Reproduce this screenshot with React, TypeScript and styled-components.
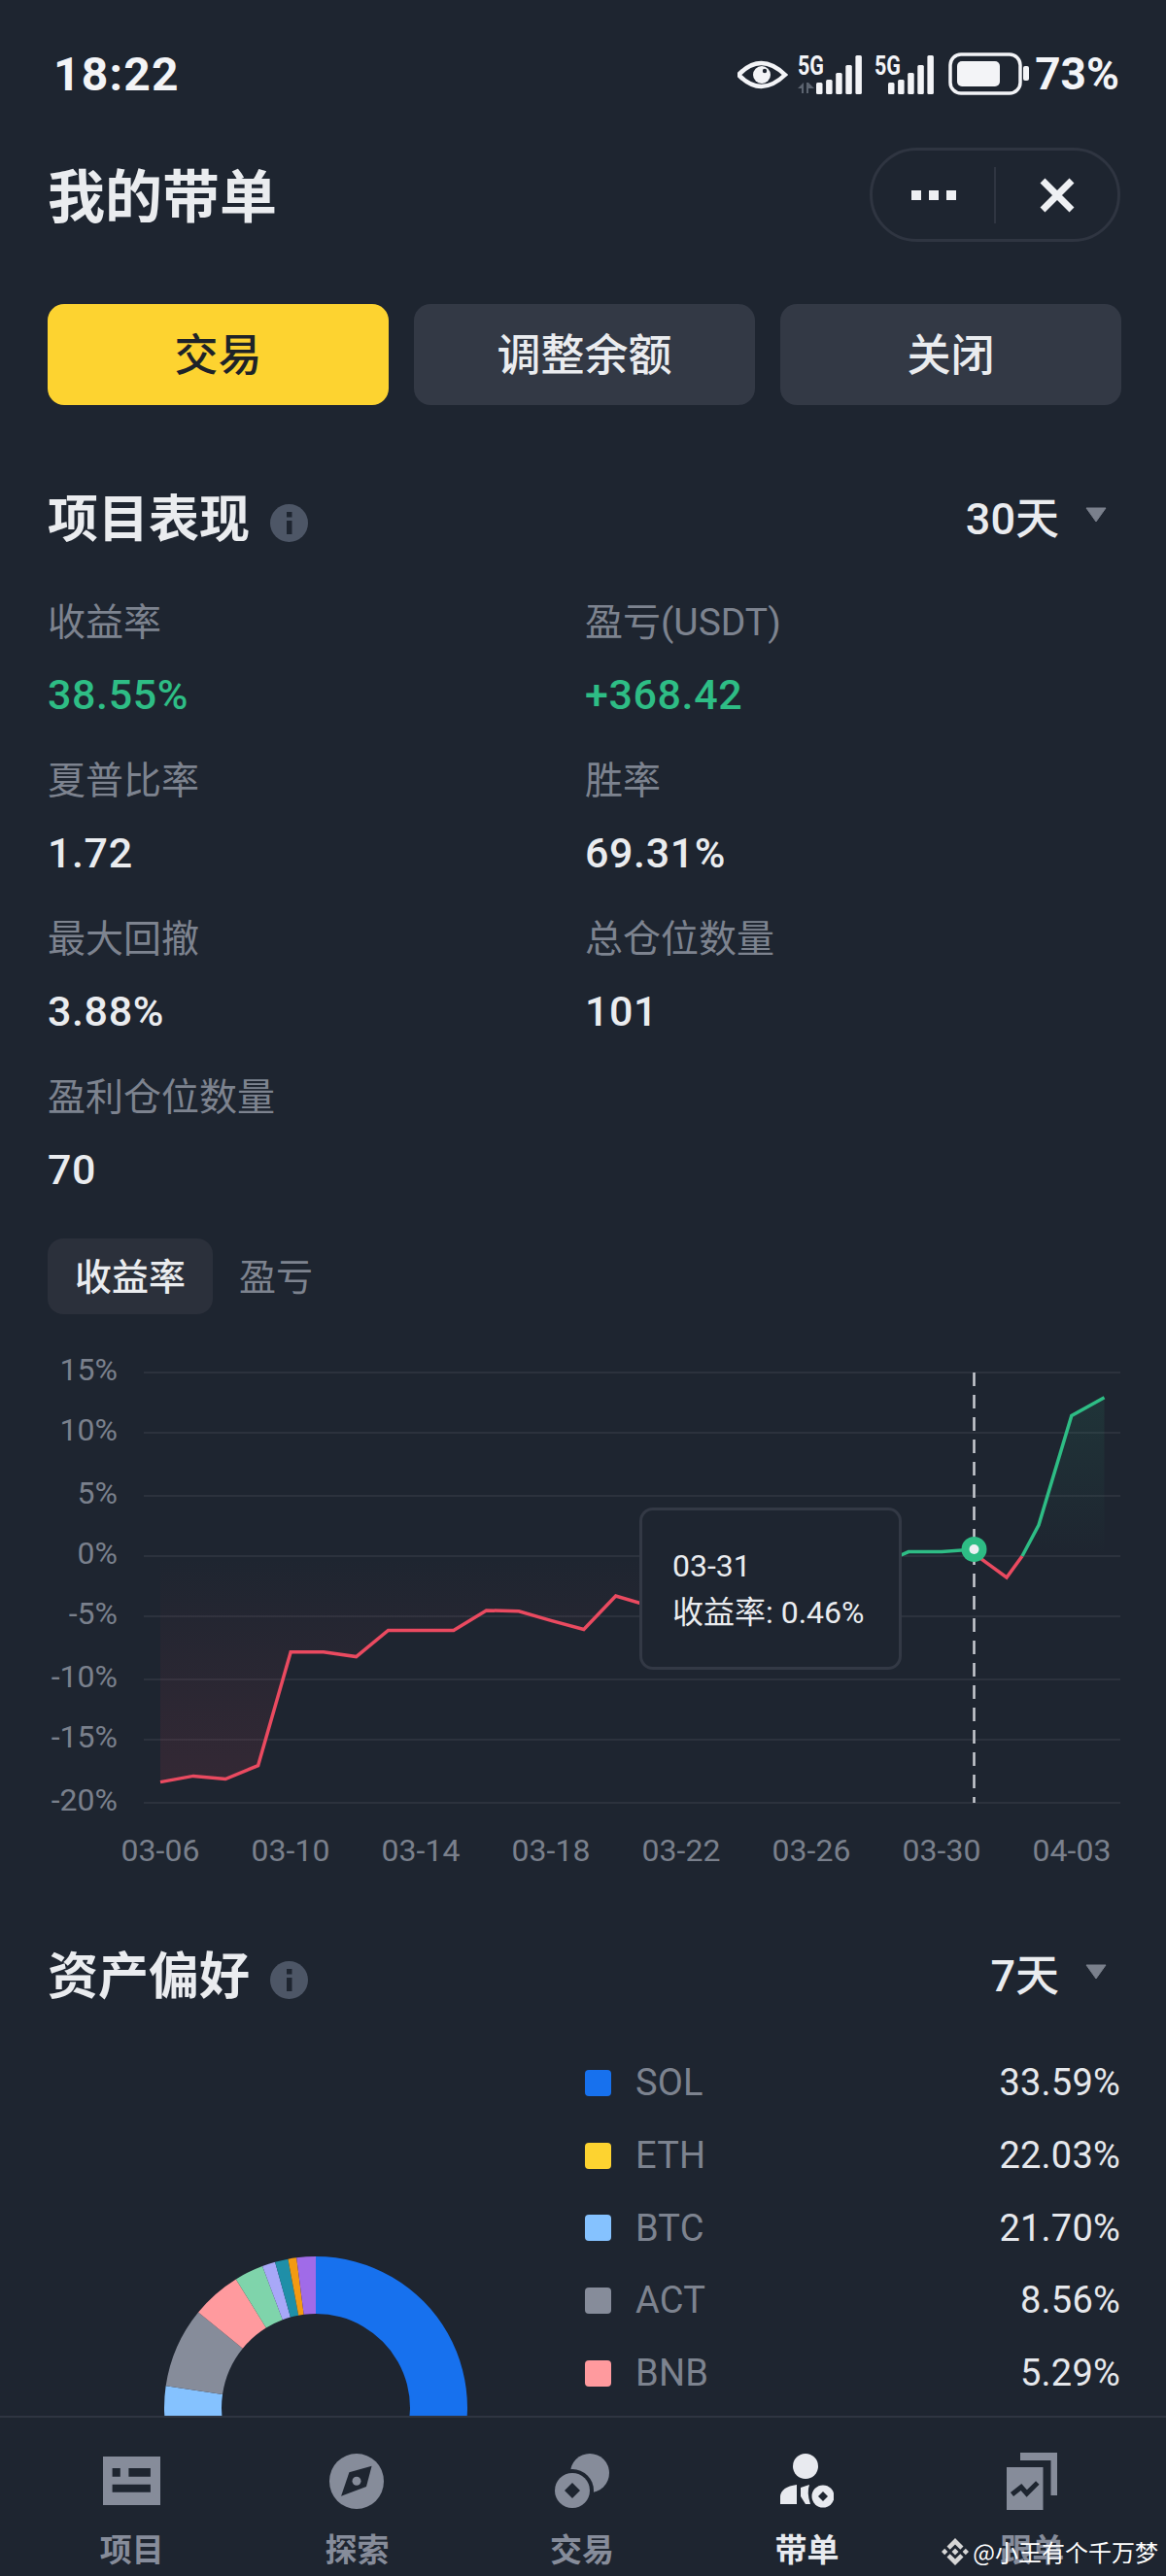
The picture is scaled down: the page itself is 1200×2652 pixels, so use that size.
import React from "react";
import styled, { createGlobalStyle } from "styled-components";

const BG = "#1e2530";
const FONT = `Roboto, "Noto Sans CJK SC", sans-serif`;

const Global = createGlobalStyle`
  html, body { margin: 0; padding: 0; background: ${BG}; }
  * { box-sizing: border-box; }
`;

const Page = styled.div`
  position: relative;
  width: 1200px;
  height: 2652px;
  overflow: hidden;
  background: ${BG};
  color: #eaecef;
  font-family: ${FONT};
`;
const StatusBar = styled.div`
  height: 152px;
  padding: 0 48px 0 55px;
  display: flex;
  align-items: center;
  justify-content: space-between;
`;
const Time = styled.div`
  font-size: 48px;
  font-weight: 700;
  letter-spacing: 1.2px;
  color: #f3f4f7;
`;
const StatusRight = styled.div`
  display: flex;
  align-items: center;
  gap: 6px;
`;
const Battery = styled.div`
  font-size: 46px;
  font-weight: 700;
  color: #f3f4f7;
`;
const Header = styled.div`
  height: 97px;
  padding: 0 47px 0 49px;
  display: flex;
  align-items: center;
  justify-content: space-between;
`;
const Title = styled.h1`
  margin: 0;
  padding-bottom: 5px;
  font-size: 59px;
  font-weight: 700;
  color: #eaecef;
`;
const Capsule = styled.div`
  width: 258px;
  height: 97px;
  border: 3px solid #2f3541;
  border-radius: 49px;
  display: grid;
  grid-template-columns: 1fr 2px 1fr;
  align-items: center;
  justify-items: center;
`;
const Divider = styled.div`
  width: 2px;
  height: 58px;
  background: #2f3541;
`;
const Actions = styled.div`
  margin-top: 64px;
  padding: 0 46px 0 49px;
  display: grid;
  grid-template-columns: repeat(3, 1fr);
  gap: 26px;
`;
const ActionButton = styled.div<{ $primary?: boolean }>`
  height: 104px;
  padding-bottom: 6px;
  border-radius: 17px;
  display: flex;
  align-items: center;
  justify-content: center;
  font-size: 45px;
  font-weight: 500;
  background: ${(p) => (p.$primary ? "#fdd330" : "#333945")};
  color: ${(p) => (p.$primary ? "#1e2329" : "#eaecef")};
`;
const SectionHead = styled.div<{ $top: number }>`
  margin-top: ${(p) => p.$top}px;
  height: 60px;
  padding: 0 47px 6px 49px;
  display: flex;
  align-items: center;
  justify-content: space-between;
`;
const SectionTitle = styled.div`
  display: flex;
  align-items: center;
  gap: 21px;
  font-size: 52px;
  font-weight: 700;
  color: #eaecef;
`;
const Period = styled.div`
  display: flex;
  align-items: center;
  gap: 27px;
  padding-right: 14px;
  font-size: 45px;
  font-weight: 500;
  color: #eaecef;
`;
const Metrics = styled.div`
  margin-top: 50px;
  padding-left: 49px;
  display: grid;
  grid-template-columns: 553px 1fr;
  row-gap: 25px;
`;
const Metric = styled.div`
  display: flex;
  flex-direction: column;
  gap: 10px;
`;
const MetricLabel = styled.div`
  font-size: 39px;
  line-height: 56px;
  color: #7d838f;
`;
const MetricValue = styled.div<{ $green?: boolean }>`
  font-size: 43px;
  line-height: 72px;
  font-weight: 500;
  letter-spacing: 0.6px;
  color: ${(p) => (p.$green ? "#2ebd85" : "#eaecef")};
`;
const Tabs = styled.div`
  margin-top: 35px;
  padding-left: 49px;
  display: flex;
  align-items: center;
  gap: 27px;
`;
const Tab = styled.div<{ $active?: boolean }>`
  height: 78px;
  padding: 0 ${(p) => (p.$active ? "28px" : "0")} 6px;
  border-radius: 16px;
  display: flex;
  align-items: center;
  font-size: 38px;
  font-weight: ${(p) => (p.$active ? 500 : 400)};
  background: ${(p) => (p.$active ? "#2b303b" : "transparent")};
  color: ${(p) => (p.$active ? "#eaecef" : "#7d838f")};
`;
const ChartBox = styled.div`
  position: relative;
  margin: 42px 0 0 49px;
  width: 1104px;
  height: 535px;
`;
const AxisText = styled.text`
  font-family: ${FONT};
  font-size: 32px;
  fill: #7a808c;
  dominant-baseline: central;
`;
const Tooltip = styled.div`
  position: absolute;
  left: 609px;
  top: 157px;
  width: 270px;
  height: 167px;
  padding: 0 0 0 31px;
  border: 3px solid #333945;
  border-radius: 14px;
  background: ${BG};
  display: flex;
  flex-direction: column;
  justify-content: center;
  font-size: 32px;
  line-height: 48px;
  color: #eaecef;
`;
const AssetRow = styled.div`
  margin-top: 44px;
  padding: 0 47px 0 49px;
  display: grid;
  grid-template-columns: 553px 1fr;
`;
const DonutSlot = styled.div`
  padding: 216px 0 0 120px;
`;
const Legend = styled.div`
  display: flex;
  flex-direction: column;
`;
const LegendRow = styled.div`
  height: 74.7px;
  display: flex;
  align-items: center;
  font-size: 38px;
  letter-spacing: 0.2px;
`;
const Swatch = styled.span<{ $color: string }>`
  width: 27px;
  height: 27px;
  border-radius: 4px;
  margin-right: 25px;
  background: ${(p) => p.$color};
`;
const LegendName = styled.span`
  flex: 1;
  color: #7d838f;
`;
const LegendPct = styled.span`
  color: #e6e8ec;
`;
const Nav = styled.nav`
  position: absolute;
  left: 0;
  right: 0;
  top: 2487px;
  bottom: 0;
  padding: 35px 22px 0 20px;
  border-top: 2px solid #2f3541;
  background: ${BG};
  display: grid;
  grid-template-columns: repeat(5, 1fr);
`;
const NavItem = styled.div<{ $active?: boolean }>`
  display: flex;
  flex-direction: column;
  align-items: center;
  color: ${(p) => (p.$active ? "#e8eaef" : "#868c9a")};
  font-size: 33px;
  font-weight: 700;
`;
const NavIcon = styled.div`
  height: 60px;
  display: flex;
  align-items: center;
  justify-content: center;
`;
const NavLabel = styled.div`
  margin-top: 22px;
  line-height: 40px;
`;
const Watermark = styled.div`
  position: absolute;
  right: 8px;
  bottom: 9px;
  display: flex;
  align-items: center;
  gap: 4px;
  font-family: "Noto Sans CJK SC", sans-serif;
  font-size: 24px;
  line-height: 32px;
  font-weight: 400;
  color: #ffffff;
`;

const Info = () => (
  <svg width="39" height="39" viewBox="0 0 39 39" style={{ marginTop: 16 }}>
    <circle cx="19.5" cy="19.5" r="19.5" fill="#4d5666" />
    <rect x="17" y="8" width="5.5" height="5.5" fill={BG} />
    <rect x="17" y="17" width="5.5" height="14" fill={BG} />
  </svg>
);
const Caret = () => (
  <svg width="22" height="16" viewBox="0 0 22 16">
    <path d="M1 1h20L11 15z" fill="#7a808c" stroke="#7a808c" strokeLinejoin="round" />
  </svg>
);

const BAR_HEIGHTS = [12, 15, 22, 30, 40];
const Bars = ({ x }: { x: number }) => (
  <g fill="#f3f4f7">
    {BAR_HEIGHTS.map((h, i) => (
      <rect key={i} x={x + i * 10.1} y={43 - h} width="6.5" height={h} rx="1.5" />
    ))}
  </g>
);
const FiveG = styled.text`
  font-family: ${FONT};
  font-size: 27px;
  font-weight: 700;
  fill: #f3f4f7;
`;
const StatusIcons = () => (
  <svg width="300" height="44" viewBox="0 0 300 44">
    <path d="M1 23 Q24 -1 49 23 Q24 47 1 23Z" fill="none" stroke="#f3f4f7" strokeWidth="4.5" />
    <circle cx="25" cy="23" r="9" fill="#f3f4f7" />
    <circle cx="28" cy="19" r="2.2" fill={BG} />
    <FiveG x="62" y="23" textLength="27" lengthAdjust="spacingAndGlyphs">5G</FiveG>
    <path d="M62 37l6-6v11h-2v-5zM71 31h2l6 6h-6v5h-2z" fill="#5c6470" />
    <Bars x={81} />
    <FiveG x="141" y="23" textLength="27" lengthAdjust="spacingAndGlyphs">5G</FiveG>
    <Bars x={155} />
    <rect x="219" y="2" width="72" height="40" rx="11" fill="none" stroke="#f3f4f7" strokeWidth="3.5" />
    <rect x="226" y="9" width="44" height="26" rx="5" fill="#f3f4f7" />
    <rect x="294" y="14" width="6" height="15" rx="2" fill="#f3f4f7" />
  </svg>
);

const GRID = [1413, 1475, 1540, 1602, 1664, 1729, 1791, 1856];
const YLABELS = ["15%", "10%", "5%", "0%", "-5%", "-10%", "-15%", "-20%"];
const XLABELS: [string, number][] = [
  ["03-06", 165], ["03-10", 299], ["03-14", 433], ["03-18", 567],
  ["03-22", 701], ["03-26", 835], ["03-30", 969], ["04-03", 1103],
];
const RED: [number, number][] = [
  [165, 1834.6], [199, 1828.4], [232, 1831.5], [265.6, 1817.7], [299.2, 1700.7], [333, 1700.7],
  [366.6, 1705.6], [399.5, 1678.4], [433, 1678.4], [466.8, 1678.4], [500.5, 1657.9], [534, 1658.8],
  [567.9, 1668.6], [600.8, 1677.5], [633.7, 1643.1], [667.3, 1653], [700, 1650], [800, 1630], [925, 1602],
];
const GREEN: [number, number][] = [
  [925, 1602], [935, 1597.6], [969, 1597.6], [1002.5, 1595], [1006, 1602],
];
const RED2: [number, number][] = [[1006, 1602], [1036, 1624], [1052, 1602]];
const GREEN2: [number, number][] = [[1052, 1602], [1069, 1570], [1102.8, 1457.4], [1136.5, 1438.7]];
const toPts = (a: [number, number][]) => a.map((p) => p.join(",")).join(" ");

const Chart = () => (
  <svg width="1104" height="535" viewBox="49 1395 1104 535">
    <defs>
      <linearGradient id="redFill" x1="0" y1="0" x2="0" y2="1">
        <stop offset="0" stopColor="#f6465d" stopOpacity="0" />
        <stop offset="1" stopColor="#f6465d" stopOpacity="0.1" />
      </linearGradient>
      <linearGradient id="greenFill" x1="0" y1="0" x2="0" y2="1">
        <stop offset="0" stopColor="#2ebd85" stopOpacity="0.1" />
        <stop offset="1" stopColor="#2ebd85" stopOpacity="0" />
      </linearGradient>
    </defs>
    {GRID.map((y, i) => (
      <g key={y}>
        <line x1="148" x2="1153" y1={y} y2={y} stroke="#2c323d" strokeWidth="2" />
        <AxisText x="121" y={y - 3} textAnchor="end">{YLABELS[i]}</AxisText>
      </g>
    ))}
    {XLABELS.map(([t, x]) => (
      <AxisText key={t} x={x} y="1905" textAnchor="middle">{t}</AxisText>
    ))}
    <polygon points={`165,1602 ${toPts(RED)}`} fill="url(#redFill)" />
    <polygon points={`1052,1602 ${toPts(GREEN2)} 1136.5,1602`} fill="url(#greenFill)" />
    <polyline points={toPts(RED)} fill="none" stroke="#ea4a60" strokeWidth="3.5" />
    <polyline points={toPts(RED2)} fill="none" stroke="#ea4a60" strokeWidth="3.5" />
    <polyline points={toPts(GREEN)} fill="none" stroke="#2ebd85" strokeWidth="3.5" />
    <polyline points={toPts(GREEN2)} fill="none" stroke="#2ebd85" strokeWidth="3.5" />
    <line x1="1002.5" x2="1002.5" y1="1413" y2="1856" stroke="#c9ccd2" strokeWidth="2.5" strokeDasharray="14 9" />
    <circle cx="1002.5" cy="1595" r="13" fill="#2ebd85" />
    <circle cx="1002.5" cy="1595" r="5" fill="#eef0f3" />
  </svg>
);

const ASSETS = [
  { name: "SOL", pct: 33.59, color: "#1771ee" },
  { name: "ETH", pct: 22.03, color: "#fdd330" },
  { name: "BTC", pct: 21.7, color: "#85c2ff" },
  { name: "ACT", pct: 8.56, color: "#868c9a" },
  { name: "BNB", pct: 5.29, color: "#ff9a9e" },
];
const SLICES = [
  ...ASSETS,
  { name: "a", pct: 3.1, color: "#7fd4ab" },
  { name: "b", pct: 1.4, color: "#a8a8f8" },
  { name: "c", pct: 1.4, color: "#1f8fa8" },
  { name: "d", pct: 0.9, color: "#f39a12" },
  { name: "e", pct: 2.03, color: "#a06be8" },
];
const arc = (from: number, to: number) => {
  const R = 156, r = 97, c = 156;
  const p = (pct: number, rad: number) => {
    const a = (pct / 100) * 2 * Math.PI;
    return `${c + rad * Math.sin(a)} ${c - rad * Math.cos(a)}`;
  };
  const large = to - from > 50 ? 1 : 0;
  return `M${p(from, R)}A${R} ${R} 0 ${large} 1 ${p(to, R)}L${p(to, r)}A${r} ${r} 0 ${large} 0 ${p(from, r)}Z`;
};
const Donut = () => {
  let acc = 0;
  return (
    <svg width="312" height="312" viewBox="0 0 312 312">
      {SLICES.map((s) => {
        const d = arc(acc, acc + s.pct);
        acc += s.pct;
        return <path key={s.name} d={d} fill={s.color} />;
      })}
    </svg>
  );
};

const ProjectIcon = () => (
  <svg width="59" height="50" viewBox="0 0 59 50">
    <path fillRule="evenodd" fill="currentColor" d="M0 0h59v50H0zM9.600 12v8.700h8.200V12zM26.400 12v8.700h22.500V12zM9.600 28.700v8h39.300v-8z" />
  </svg>
);
const CompassIcon = () => (
  <svg width="56" height="57" viewBox="0 0 56 57">
    <ellipse cx="28" cy="28.500" rx="28" ry="28.500" fill="currentColor" />
    <path d="M43.600 12.700L38 34L12.100 43.700L20.400 19.300Z" fill={BG} />
    <circle cx="28" cy="28.300" r="4.500" fill="currentColor" />
  </svg>
);
const CoinsIcon = () => (
  <svg width="56" height="56" viewBox="0 0 56 56">
    <mask id="coinGap">
      <rect width="56" height="56" fill="#fff" />
      <circle cx="18" cy="38" r="22" fill="#000" />
    </mask>
    <circle cx="36" cy="20" r="20" fill="currentColor" mask="url(#coinGap)" />
    <circle cx="18" cy="38" r="18" fill="currentColor" />
    <path d="M18 30l8 8-8 8-8-8z" fill={BG} />
  </svg>
);
const LeadIcon = () => (
  <svg width="55" height="56" viewBox="0 0 55 56">
    <circle cx="26" cy="13" r="13" fill="currentColor" />
    <path d="M0 52v-8Q1 34 17 32v20z" fill="currentColor" />
    <path d="M21 35l9-3q-3 8 1 20l-5 0-5-8z" fill="currentColor" />
    <circle cx="44" cy="44" r="11.500" fill="currentColor" />
    <path d="M44 39l5 5-5 5-5-5z" fill={BG} />
  </svg>
);
const CopyIcon = () => (
  <svg width="52" height="59" viewBox="0 0 52 59">
    <path d="M14 0h38v44h-6.500V8H14z" fill="currentColor" />
    <rect x="0" y="15" width="37.500" height="44" fill="currentColor" />
    <polyline points="5.500,43 15,35.500 20.700,42 31.800,31" fill="none" stroke={BG} strokeWidth="5" />
  </svg>
);
const BinanceMark = () => (
  <svg width="28" height="28" viewBox="0 0 28 28" fill="#d6d6d6">
    <polygon points="14,10.500 17.500,14 14,17.500 10.500,14" />
    <polygon points="0,14 3.200,10.800 6.400,14 3.200,17.200" />
    <polygon points="21.600,14 24.800,10.800 28,14 24.800,17.200" />
    <polygon points="14,0 22.500,8.500 19.300,11.700 14,6.400 8.700,11.700 5.500,8.500" />
    <polygon points="14,28 22.500,19.500 19.300,16.300 14,21.600 8.700,16.300 5.500,19.500" />
  </svg>
);

const METRICS = [
  { label: "收益率", value: "38.55%", green: true },
  { label: "盈亏(USDT)", value: "+368.42", green: true },
  { label: "夏普比率", value: "1.72" },
  { label: "胜率", value: "69.31%" },
  { label: "最大回撤", value: "3.88%" },
  { label: "总仓位数量", value: "101" },
  { label: "盈利仓位数量", value: "70" },
];

export default function App() {
  return (
    <Page>
      <Global />
      <StatusBar>
        <Time>18:22</Time>
        <StatusRight>
          <StatusIcons />
          <Battery>73%</Battery>
        </StatusRight>
      </StatusBar>
      <Header>
        <Title>我的带单</Title>
        <Capsule>
          <svg width="46" height="10" viewBox="0 0 46 10" fill="#eef0f3">
            <rect x="0" width="10" height="10" />
            <rect x="18" width="10" height="10" />
            <rect x="36" width="10" height="10" />
          </svg>
          <Divider />
          <svg width="38" height="38" viewBox="0 0 38 38">
            <path d="M4 4L34 34M34 4L4 34" stroke="#eef0f3" strokeWidth="7" />
          </svg>
        </Capsule>
      </Header>
      <Actions>
        <ActionButton $primary>交易</ActionButton>
        <ActionButton>调整余额</ActionButton>
        <ActionButton>关闭</ActionButton>
      </Actions>
      <SectionHead $top={86}>
        <SectionTitle>项目表现<Info /></SectionTitle>
        <Period>30天<Caret /></Period>
      </SectionHead>
      <Metrics>
        {METRICS.map((m) => (
          <Metric key={m.label}>
            <MetricLabel>{m.label}</MetricLabel>
            <MetricValue $green={m.green}>{m.value}</MetricValue>
          </Metric>
        ))}
      </Metrics>
      <Tabs>
        <Tab $active>收益率</Tab>
        <Tab>盈亏</Tab>
      </Tabs>
      <ChartBox>
        <Chart />
        <Tooltip>
          <div>03-31</div>
          <div>收益率: 0.46%</div>
        </Tooltip>
      </ChartBox>
      <SectionHead $top={73}>
        <SectionTitle>资产偏好<Info /></SectionTitle>
        <Period>7天<Caret /></Period>
      </SectionHead>
      <AssetRow>
        <DonutSlot><Donut /></DonutSlot>
        <Legend>
          {ASSETS.map((a) => (
            <LegendRow key={a.name}>
              <Swatch $color={a.color} />
              <LegendName>{a.name}</LegendName>
              <LegendPct>{a.pct.toFixed(2)}%</LegendPct>
            </LegendRow>
          ))}
        </Legend>
      </AssetRow>
      <Nav>
        <NavItem><NavIcon><ProjectIcon /></NavIcon><NavLabel>项目</NavLabel></NavItem>
        <NavItem><NavIcon><CompassIcon /></NavIcon><NavLabel>探索</NavLabel></NavItem>
        <NavItem><NavIcon><CoinsIcon /></NavIcon><NavLabel>交易</NavLabel></NavItem>
        <NavItem $active><NavIcon><LeadIcon /></NavIcon><NavLabel>带单</NavLabel></NavItem>
        <NavItem><NavIcon><CopyIcon /></NavIcon><NavLabel>跟单</NavLabel></NavItem>
      </Nav>
      <Watermark><BinanceMark />@小王有个千万梦</Watermark>
    </Page>
  );
}
